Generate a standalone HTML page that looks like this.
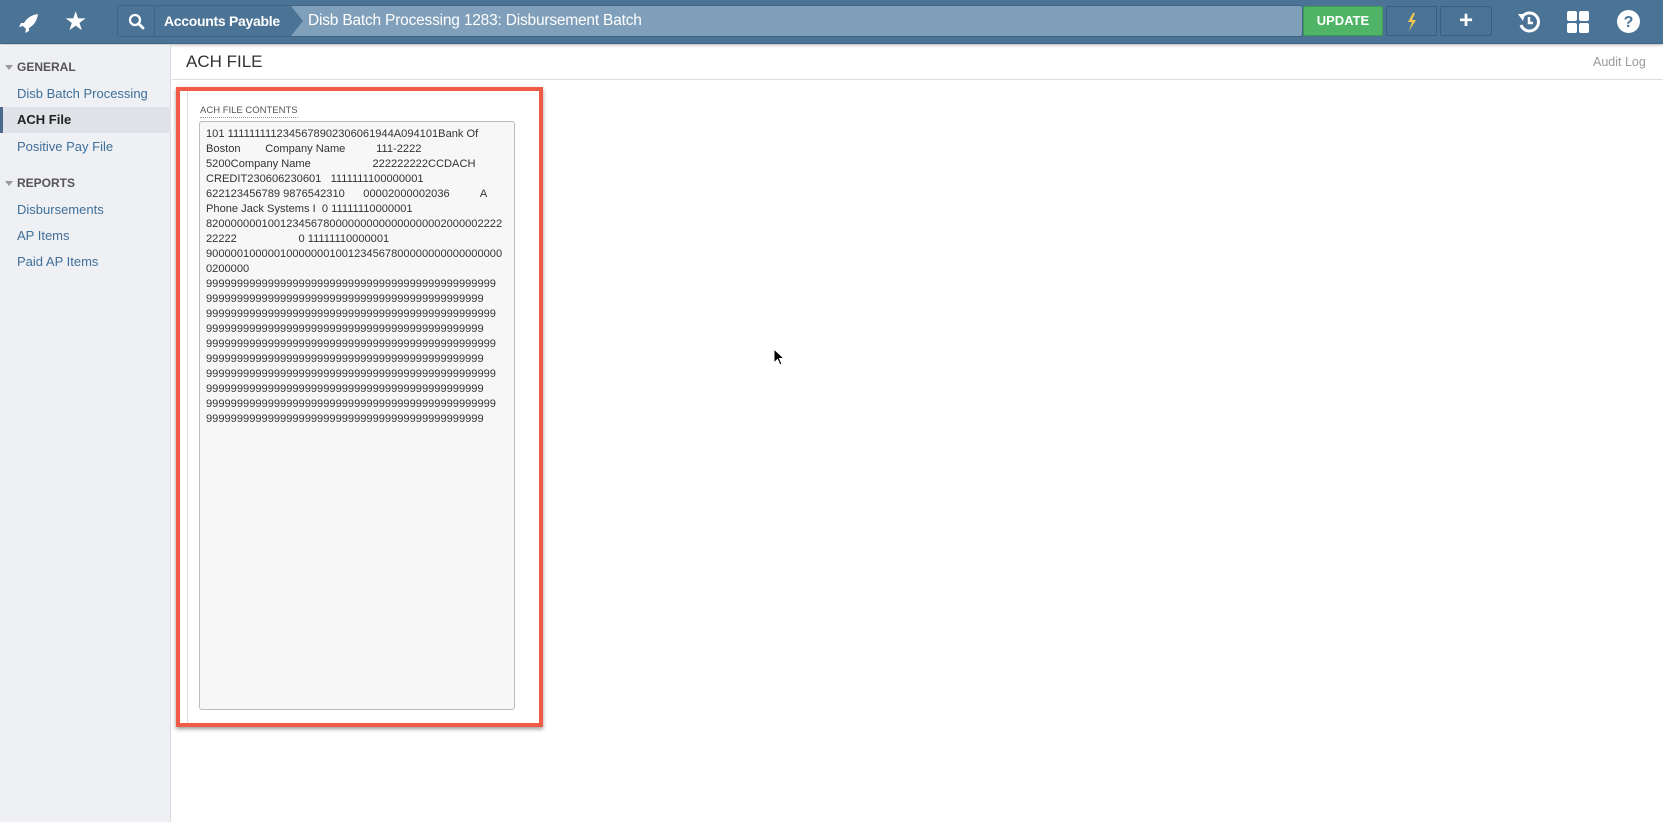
<!DOCTYPE html>
<html><head><meta charset="utf-8"><style>
*{box-sizing:border-box;margin:0;padding:0}
body{width:1663px;height:822px;overflow:hidden;background:#fff;font-family:"Liberation Sans",sans-serif;position:relative}
.top{position:absolute;left:0;top:0;width:1663px;height:44px;background:#4b7396;border-bottom:1px solid #3d6283;box-shadow:0 1px 3px rgba(0,0,0,.3)}
.bc{position:absolute;left:117px;top:5px;width:1186px;height:32px;background:#7f9fba;border:1px solid #3f6486;border-radius:3px;white-space:nowrap}
.bc .s{position:absolute;left:0;top:0;width:37px;height:30px;background:#4b7396;border-right:1px solid #3f6486}
.bc .ap{position:absolute;left:37px;top:0;width:136px;height:30px;background:#4b7396;color:#fff;font-weight:bold;font-size:14px;line-height:30px;padding-left:9px;letter-spacing:-0.3px}
.bc .arr{position:absolute;left:173px;top:0;width:0;height:0;border-top:15px solid transparent;border-bottom:15px solid transparent;border-left:12px solid #4b7396}
.bc .t{position:absolute;left:190px;top:0;color:#fff;font-size:15.5px;line-height:30px;letter-spacing:-0.2px}
.btn{position:absolute;top:6px;height:30px;border-radius:2px}
.side{position:absolute;left:0;top:45px;width:171px;height:777px;background:#eef0f3;border-right:1px solid #d9dce0}
.side .i{position:absolute;left:17px;font-size:13px;color:#3f6f9a}
.side .h{position:absolute;color:#555;font-weight:bold;font-size:12px;left:17px}
.side .h:before{content:"";position:absolute;left:-12px;top:5px;border-left:4px solid transparent;border-right:4px solid transparent;border-top:5px solid #999}
.side .sel{position:absolute;left:0;top:62px;width:171px;height:26px;background:#dfe2e7;border-left:3px solid #4b6b8a}
pre{font-family:"Liberation Sans",sans-serif;font-size:11.1px;line-height:15px;color:#333;position:absolute;left:206px;top:127px}
</style></head><body>
<div class="top">
 <svg style="position:absolute;left:18px;top:12px" width="22" height="22" viewBox="0 0 22 22"><path d="M20 2 C13 3 9 6 6 11 L3 11 L1 15 L5 14 L8 17 L7 21 L11 19 L11 16 C16 13 19 9 20 2Z" fill="#fff"/></svg>
 <div style="position:absolute;left:64px;top:6px;color:#fff;font-size:26px;line-height:30px">★</div>
 <div class="bc"><div class="s"><svg style="position:absolute;left:10px;top:7px" width="17" height="17" viewBox="0 0 17 17"><circle cx="7" cy="7" r="5" fill="none" stroke="#fff" stroke-width="2.3"/><path d="M10.5 10.5 L15 15" stroke="#fff" stroke-width="2.8" stroke-linecap="round"/></svg></div><div class="ap">Accounts Payable</div><div class="arr"></div><div class="t">Disb Batch Processing 1283: Disbursement Batch</div></div>
 <div class="btn" style="left:1303px;width:80px;background:#4fb466;border:1px solid #3d9a52;color:#fff;font-weight:bold;font-size:13px;text-align:center;line-height:28px">UPDATE</div>
 <div class="btn" style="left:1386px;width:51px;background:#4b7396;border:1px solid #3a5d7d"><svg style="position:absolute;left:19px;top:6px" width="12" height="18" viewBox="0 0 12 18"><path d="M7 0 L2 9 L6 9 L3 18 L10 7 L6 7 L9 0Z" fill="#f2c94c"/></svg></div>
 <div class="btn" style="left:1440px;width:52px;background:#4b7396;border:1px solid #3a5d7d;color:#fff;font-size:24px;font-weight:bold;text-align:center;line-height:27px">+</div>
 <svg style="position:absolute;left:1517px;top:10px" width="24" height="24" viewBox="0 0 24 24"><path d="M5 7 A9 9 0 1 1 4 15" fill="none" stroke="#fff" stroke-width="3"/><path d="M1 4 L8 4 L6 11Z" fill="#fff"/><path d="M12 7 L12 13 L16 13" fill="none" stroke="#fff" stroke-width="2.5"/></svg>
 <svg style="position:absolute;left:1567px;top:11px" width="22" height="22" viewBox="0 0 22 22"><rect x="0" y="0" width="10" height="10" rx="2" fill="#fff"/><rect x="12" y="0" width="10" height="10" rx="2" fill="#fff"/><rect x="0" y="12" width="10" height="10" rx="2" fill="#fff"/><rect x="12" y="12" width="10" height="10" rx="2" fill="#fff"/></svg>
 <svg style="position:absolute;left:1617px;top:10px" width="23" height="23" viewBox="0 0 23 23"><circle cx="11.5" cy="11.5" r="11.5" fill="#fff"/><text x="11.5" y="17" text-anchor="middle" font-family="Liberation Sans" font-weight="bold" font-size="16" fill="#4b7396">?</text></svg>
</div>
<div class="side">
 <div class="sel"></div>
 <div class="h" style="top:15px">GENERAL</div>
 <div class="i" style="top:41px">Disb Batch Processing</div>
 <div class="i" style="top:67px;color:#222;font-weight:bold">ACH File</div>
 <div class="i" style="top:94px">Positive Pay File</div>
 <div class="h" style="top:131px">REPORTS</div>
 <div class="i" style="top:157px">Disbursements</div>
 <div class="i" style="top:183px">AP Items</div>
 <div class="i" style="top:209px">Paid AP Items</div>
</div>
<div style="position:absolute;left:186px;top:52px;font-size:17px;color:#333">ACH FILE</div>
<div style="position:absolute;left:1593px;top:55px;font-size:12.5px;color:#999">Audit Log</div>
<div style="position:absolute;left:172px;top:79px;width:1491px;height:1px;background:#ddd"></div>
<div style="position:absolute;left:176px;top:87px;width:367px;height:640px;border:4px solid #f25a48;box-shadow:0 2px 4px rgba(0,0,0,.4);background:#fff">
 <div style="position:absolute;left:7px;top:0;width:1px;height:100%;background:#ddd"></div>
 <div style="position:absolute;left:20px;top:14px;font-size:9.5px;color:#555;border-bottom:1px dotted #999;line-height:12px">ACH FILE CONTENTS</div>
 <div style="position:absolute;left:19px;top:30px;width:316px;height:589px;background:#f7f7f7;border:1px solid #bbb;border-radius:3px"></div>
</div>
<pre>101 1111111112345678902306061944A094101Bank Of
Boston        Company Name          111-2222
5200Company Name                    222222222CCDACH
CREDIT230606230601   1111111100000001
622123456789 9876542310      00002000002036          A
Phone Jack Systems I  0 11111110000001
820000000100123456780000000000000000002000002222
22222                    0 11111110000001
900000100000100000001001234567800000000000000000
0200000
99999999999999999999999999999999999999999999999
999999999999999999999999999999999999999999999
99999999999999999999999999999999999999999999999
999999999999999999999999999999999999999999999
99999999999999999999999999999999999999999999999
999999999999999999999999999999999999999999999
99999999999999999999999999999999999999999999999
999999999999999999999999999999999999999999999
99999999999999999999999999999999999999999999999
999999999999999999999999999999999999999999999</pre>
<svg style="position:absolute;left:773px;top:348px" width="12" height="18" viewBox="0 0 12 18"><path d="M1 1 L1 15 L4.5 11.5 L7 17 L9 16 L6.5 10.5 L11 10.5Z" fill="#000" stroke="#fff" stroke-width="1"/></svg>
</body></html>
